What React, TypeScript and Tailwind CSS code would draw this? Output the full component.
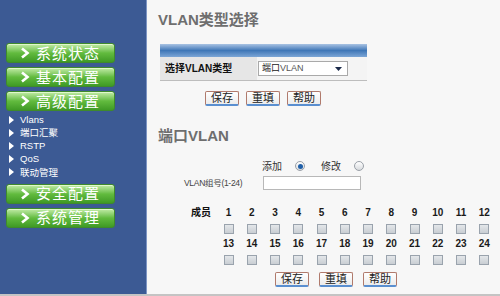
const SIDE_TOP = ["系统状态", "基本配置", "高级配置"];
const SUB_MENU = ["Vlans", "端口汇聚", "RSTP", "QoS", "联动管理"];
const SIDE_BOTTOM = ["安全配置", "系统管理"];
const PORTS = Array.from({ length: 24 }, (_, i) => i + 1);

const CJK = "font-['Liberation_Sans','Noto_Sans_CJK_SC',sans-serif]";

function GreenButton({ label }: { label: string }) {
  return (
    <div className="h-[20px] w-[109px] ml-[6px] rounded-[3px] border border-[#3f8a2c] bg-gradient-to-b from-[#c2eca6] via-[#62bb3e] to-[#3f9a25] flex items-center shadow-[inset_0_1px_0_#e0f8cc]">
      <svg width="10" height="12" viewBox="0 0 10 12" className="ml-[13px]">
        <path d="M2 1.5 L7.5 6 L2 10.5" fill="none" stroke="#fff" strokeWidth="2.6" />
      </svg>
      <span className="ml-[6px] text-[15px] leading-none text-white tracking-[1px]">{label}</span>
    </div>
  );
}

function FormButton({ label }: { label: string }) {
  return (
    <div className="h-[15px] w-[34px] rounded-[2px] border border-[#b07a6c] bg-gradient-to-b from-white to-[#ececec] border-b-2 border-b-[#5a8fd0] flex items-center justify-center text-[11px] leading-none text-[#222]">
      {label}
    </div>
  );
}

function Check() {
  return (
    <div className="mx-auto h-[10px] w-[10px] border border-[#9aa3ad] bg-gradient-to-b from-[#e4e7ea] to-[#c9ced3]" />
  );
}

function Radio({ on }: { on: boolean }) {
  return (
    <div className="h-[10px] w-[10px] rounded-full border border-[#9aa0a8] bg-gradient-to-b from-white to-[#d8dbde] flex items-center justify-center">
      {on && <div className="h-[5px] w-[5px] rounded-full bg-[#1f5fa8]" />}
    </div>
  );
}

export default function App() {
  return (
    <div className={`h-[296px] w-[500px] flex border-b-2 border-[#c4c4c4] overflow-hidden ${CJK}`}>
      <aside className="w-[147px] shrink-0 bg-[#3c5a94] border-r border-[#7d95c4] pt-[43px]">
        <div className="flex flex-col gap-[4px]">
          {SIDE_TOP.map((s) => (
            <GreenButton key={s} label={s} />
          ))}
        </div>
        <ul className="mt-[2px] flex flex-col">
          {SUB_MENU.map((m) => (
            <li key={m} className="h-[13.2px] flex items-center text-[9.5px] text-white">
              <span className="ml-[9px] w-0 h-0 border-y-[4px] border-y-transparent border-l-[5px] border-l-white" />
              <span className="ml-[6px] leading-none">{m}</span>
            </li>
          ))}
        </ul>
        <div className="mt-[5px] flex flex-col gap-[4px]">
          {SIDE_BOTTOM.map((s) => (
            <GreenButton key={s} label={s} />
          ))}
        </div>
      </aside>

      <main className="flex-1 bg-[#f7f7f7] pl-[11px]">
        <h1 className="mt-[11px] text-[15px] font-bold text-[#6e6e6e] leading-[18px]">VLAN类型选择</h1>

        <div className="mt-[15px] ml-[2px] w-[207px]">
          <div className="h-[13px] bg-gradient-to-b from-[#a9c3e3] via-[#3f77b7] to-[#7ca6d6]" />
          <div className="flex h-[24px] border-b border-[#bdbdbd]">
            <div className="w-[97px] bg-[#e6e6e6] flex items-center pl-[5px] text-[10px] font-bold text-[#111]">
              选择VLAN类型
            </div>
            <div className="flex-1 bg-[#f4f4f4] flex items-center">
              <div className="ml-[1px] h-[15px] w-[90px] border border-[#a9a9a9] bg-white flex items-center pl-[3px] text-[9px] text-[#222]">
                <span>端口</span>
                <span className="text-[#555]">VLAN</span>
                <svg width="7" height="4" viewBox="0 0 7 4" className="ml-auto mr-[5px]">
                  <path d="M0 0 H7 L3.5 4 Z" fill="#1b2a4a" />
                </svg>
              </div>
            </div>
          </div>
        </div>

        <div className="mt-[10px] ml-[47px] flex gap-[7px]">
          <FormButton label="保存" />
          <FormButton label="重填" />
          <FormButton label="帮助" />
        </div>

        <h2 className="mt-[21px] text-[15px] font-bold text-[#6e6e6e] leading-[18px]">端口VLAN</h2>

        <div className="mt-[15px] ml-[104px] flex items-center h-[12px] text-[10px] text-[#333]">
          <span>添加</span>
          <span className="ml-[13px]"><Radio on /></span>
          <span className="ml-[16px]">修改</span>
          <span className="ml-[13px]"><Radio on={false} /></span>
        </div>

        <div className="mt-[4px] flex items-center">
          <span className="ml-[26px] w-[72px] text-[8.5px] text-[#444] tracking-[-0.3px]">VLAN组号(1-24)</span>
          <div className="ml-[7px] h-[14px] w-[98px] border border-[#b8b8b8] bg-white" />
        </div>

        <div className="mt-[17px] flex">
          <div className="w-[53px] text-right text-[10px] font-bold text-[#111] leading-[12px]">成员</div>
          <div className="ml-[6px] grid grid-cols-[repeat(12,23.25px)] text-[10px] font-bold text-[#1a1a1a] text-center">
            {PORTS.slice(0, 12).map((p) => (
              <div key={p} className="h-[12px] leading-[12px]">{p}</div>
            ))}
            {PORTS.slice(0, 12).map((p) => (
              <div key={"c" + p} className="h-[19px] pt-[5px]"><Check /></div>
            ))}
            {PORTS.slice(12).map((p) => (
              <div key={p} className="h-[12px] leading-[12px]">{p}</div>
            ))}
            {PORTS.slice(12).map((p) => (
              <div key={"c" + p} className="h-[19px] pt-[5px]"><Check /></div>
            ))}
          </div>
        </div>

        <div className="mt-[3px] ml-[117px] flex gap-[10px]">
          <FormButton label="保存" />
          <FormButton label="重填" />
          <FormButton label="帮助" />
        </div>
      </main>
    </div>
  );
}
